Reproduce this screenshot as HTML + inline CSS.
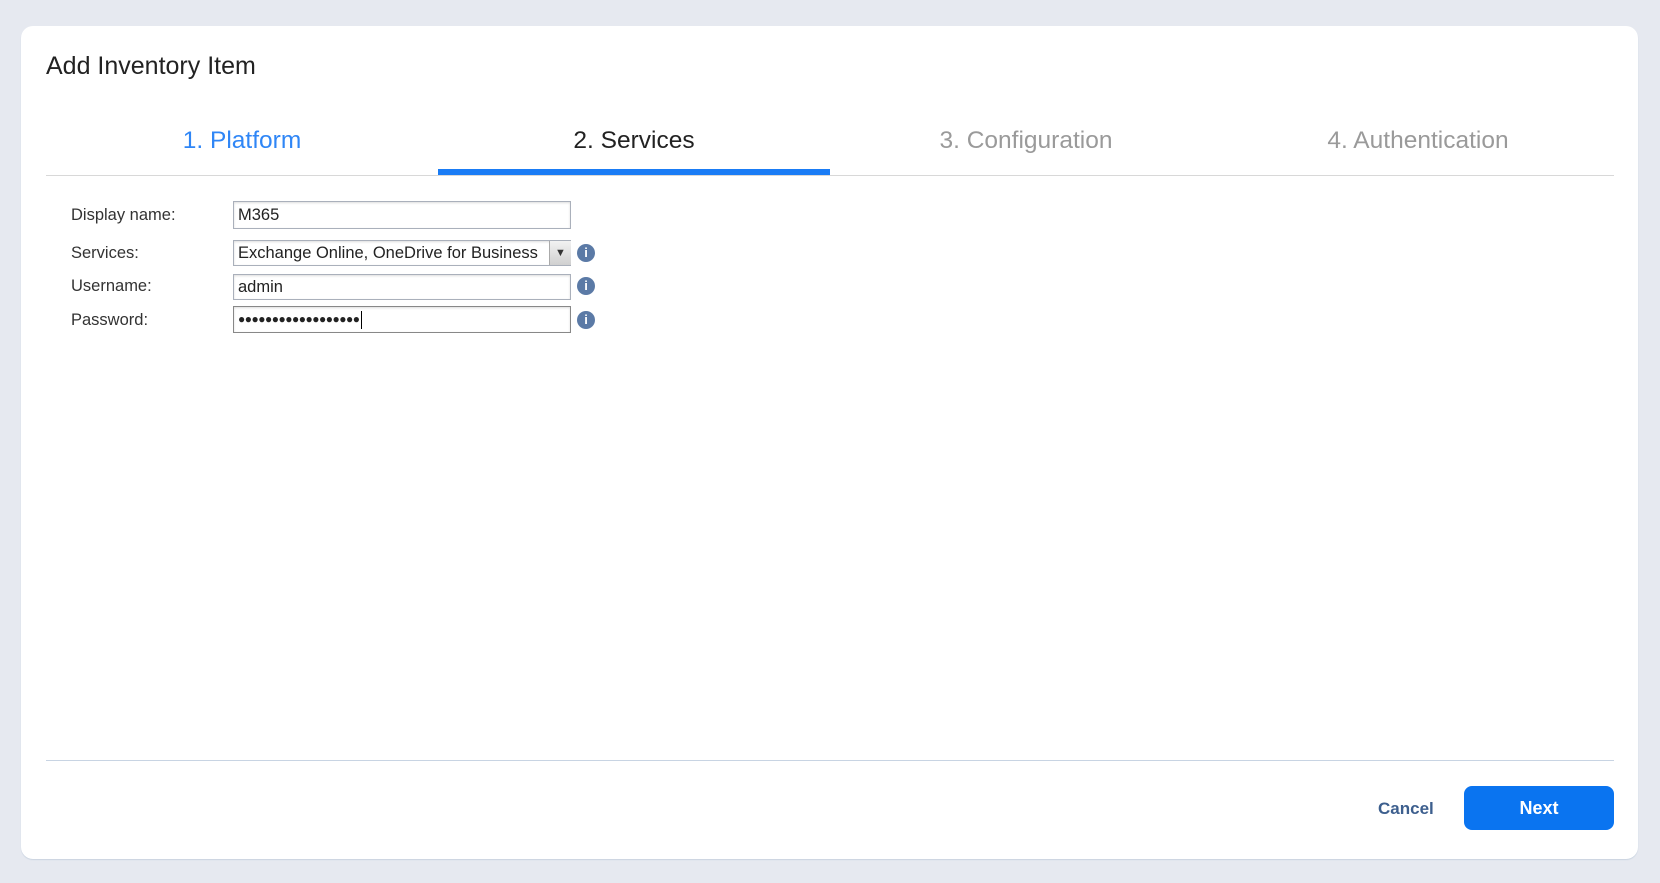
<!DOCTYPE html>
<html><head><meta charset="utf-8"><style>
html,body{margin:0;padding:0}
body{width:1660px;height:883px;background:#e6e9f0;font-family:"Liberation Sans",sans-serif;position:relative;overflow:hidden}
.card{position:absolute;left:21px;top:26px;width:1617px;height:833px;background:#fff;border-radius:12px;box-shadow:0 1px 1px #c9d3e0}
.title{position:absolute;left:46px;top:52px;font-size:25px;color:#222}
.tab{position:absolute;top:127px;width:392px;text-align:center;font-size:24.5px;color:#9a9a9a}
.sep{position:absolute;left:46px;top:175px;width:1568px;height:1px;background:#d8d8d8}
.ul{position:absolute;left:438px;top:169px;width:392px;height:6px;background:#1a7cf5}
.lbl{position:absolute;left:71px;font-size:16.5px;color:#333}
.inp{position:absolute;left:233px;width:338px;border:1px solid #aab0bb;background:#fff;box-sizing:border-box;font-size:16.5px;color:#222;padding-left:4px;overflow:hidden;white-space:nowrap;box-shadow:inset 0 1px 2px #ddd}
.info{position:absolute;left:577px;width:18px;height:18px;border-radius:50%;background:#5b7aa6;color:#fff;font:bold 13px "Liberation Sans",sans-serif;text-align:center;line-height:18px}
.footer{position:absolute;left:46px;top:760px;width:1568px;height:1px;background:#c8d4e3}
.cancel{position:absolute;left:1378px;top:799px;font-size:17px;font-weight:bold;color:#3d5f8e}
.next{position:absolute;left:1464px;top:786px;width:150px;height:44px;border-radius:8px;background:#0a74f0;color:#fff;font-weight:bold;font-size:18px;text-align:center;line-height:44px}
</style></head><body>
<div class="card"></div>
<div class="title">Add Inventory Item</div>
<div class="tab" style="left:46px;color:#2f86f6">1. Platform</div>
<div class="tab" style="left:438px;color:#222">2. Services</div>
<div class="tab" style="left:830px">3. Configuration</div>
<div class="tab" style="left:1222px">4. Authentication</div>
<div class="sep"></div><div class="ul"></div>

<div class="lbl" style="top:206px">Display name:</div>
<div class="inp" style="top:201px;height:28px;line-height:26px">M365</div>
<div class="lbl" style="top:244px">Services:</div>
<div class="inp" style="top:240px;height:26px;line-height:24px;padding-right:24px">Exchange Online, OneDrive for Business</div>
<div style="position:absolute;left:549px;top:241px;width:21px;height:24px;background:linear-gradient(#f2f2f2,#d0d0d0);border-left:1px solid #aaa;text-align:center;font-size:11px;line-height:24px;color:#333">&#9660;</div>
<div class="info" style="top:244px">i</div>
<div class="lbl" style="top:277px">Username:</div>
<div class="inp" style="top:274px;height:26px;line-height:24px">admin</div>
<div class="info" style="top:277px">i</div>
<div class="lbl" style="top:311px">Password:</div>
<div class="inp" style="top:306px;height:27px;line-height:25px;font-size:12px;letter-spacing:-0.5px;border-color:#888">●●●●●●●●●●●●●●●●●●<span style="display:inline-block;width:1px;height:18px;background:#000;vertical-align:middle;margin-left:2px"></span></div>
<div class="info" style="top:311px">i</div>

<div class="footer"></div>
<div class="cancel">Cancel</div>
<div class="next">Next</div>
</body></html>
